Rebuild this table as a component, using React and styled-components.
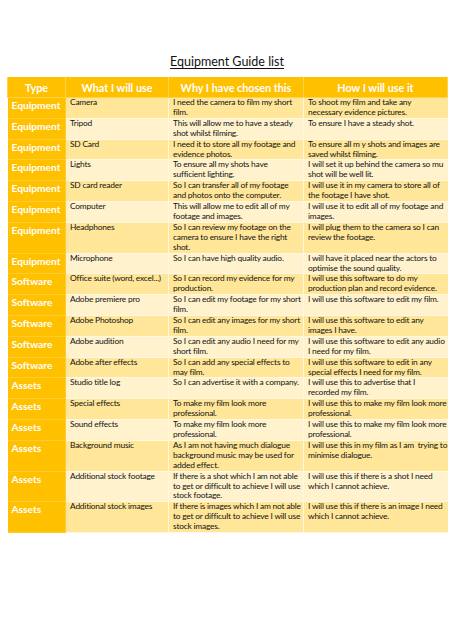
import React from 'react';
import styled, { createGlobalStyle } from 'styled-components';

const GlobalStyle = createGlobalStyle`
  html, body {
    margin: 0;
    padding: 0;
    background: #ffffff;
  }
  body {
    font-family: Lato, "Liberation Sans", sans-serif;
    color: #111;
  }
`;

const rows = [
  ['Equipment', 'Camera', 'I need the camera to film my short\nfilm.', 'To shoot my film and take any\nnecessary evidence pictures.'],
  ['Equipment', 'Tripod', 'This will allow me to have a steady\nshot whilst filming.', 'To ensure I have a steady shot.'],
  ['Equipment', 'SD Card', 'I need it to store all my footage and\nevidence photos.', 'To ensure all m y shots and images are\nsaved whilst filming.'],
  ['Equipment', 'Lights', 'To ensure all my shots have\nsufficient lighting.', 'I will set it up behind the camera so mu\nshot will be well lit.'],
  ['Equipment', 'SD card reader', 'So I can transfer all of my footage\nand photos onto the computer.', 'I will use it in my camera to store all of\nthe footage I have shot.'],
  ['Equipment', 'Computer', 'This will allow me to edit all of my\nfootage and images.', 'I will use it to edit all of my footage and\nimages.'],
  ['Equipment', 'Headphones', 'So I can review my footage on the\ncamera to ensure I have the right\nshot.', 'I will plug them to the camera so I can\nreview the footage.'],
  ['Equipment', 'Microphone', 'So I can have high quality audio.', 'I will have it placed near the actors to\noptimise the sound quality.'],
  ['Software', 'Office suite (word, excel...)', 'So I can record my evidence for my\nproduction.', 'I will use this software to do my\nproduction plan and record evidence.'],
  ['Software', 'Adobe premiere pro', 'So I can edit my footage for my short\nfilm.', 'I will use this software to edit my film.'],
  ['Software', 'Adobe Photoshop', 'So I can edit any images for my short\nfilm.', 'I will use this software to edit any\nimages I have.'],
  ['Software', 'Adobe audition', 'So I can edit any audio I need for my\nshort film.', 'I will use this software to edit any audio\nI need for my film.'],
  ['Software', 'Adobe after effects', 'So I can add any special effects to\nmay film.', 'I will use this software to edit in any\nspecial effects I need for my film.'],
  ['Assets', 'Studio title log', 'So I can advertise it with a company.', 'I will use this to advertise that I\nrecorded my film.'],
  ['Assets', 'Special effects', 'To make my film look more\nprofessional.', 'I will use this to make my film look more\nprofessional.'],
  ['Assets', 'Sound effects', 'To make my film look more\nprofessional.', 'I will use this to make my film look more\nprofessional.'],
  ['Assets', 'Background music', 'As I am not having much dialogue\nbackground music may be used for\nadded effect.', 'I will use this in my film as I am  trying to\nminimise dialogue.'],
  ['Assets', 'Additional stock footage', 'If there is a shot which I am not able\nto get or difficult to achieve I will use\nstock footage.', 'I will use this if there is a shot I need\nwhich I cannot achieve.'],
  ['Assets', 'Additional stock images', 'If there is images which I am not able\nto get or difficult to achieve I will use\nstock images.', 'I will use this if there is an image I need\nwhich I cannot achieve.'],
];

const Page = styled.div`
  padding: 53px 6px 40px 7px;
`;

const Title = styled.h1`
  margin: 0 0 7px;
  font-family: Lato, "Liberation Sans", sans-serif;
  font-weight: 400;
  font-size: 12.5px;
  line-height: 17px;
  text-align: center;
  text-decoration: underline;
  text-underline-offset: 2px;
  text-decoration-thickness: 1px;
  color: #111;
`;

const Table = styled.table`
  width: 440px;
  border-collapse: collapse;
  table-layout: fixed;
`;

const Head = styled.th`
  background: #ffc000;
  color: #ffffff;
  font-weight: 700;
  font-size: 10.8px;
  line-height: 19px;
  height: 20px;
  padding: 0;
  text-align: center;
  border: 1px solid #ffd24d;
  border-top: none;
  white-space: nowrap;
`;

const TypeCell = styled.td`
  background: #ffc000;
  color: #ffffff;
  font-weight: 700;
  font-size: 10.2px;
  line-height: 11px;
  padding: 2px 0 0 4px;
  vertical-align: top;
  border: 1px solid #ffcb33;
  border-left: none;
  white-space: nowrap;
`;

const Cell = styled.td`
  background: ${({ $dark }) => ($dark ? '#ffe699' : '#fff2cc')};
  font-size: 8.4px;
  line-height: 9.9px;
  letter-spacing: -0.2px;
  padding: 0 0 0 4px;
  vertical-align: top;
  white-space: pre;
  overflow: hidden;
  border: 1px solid #fff7e0;
  border-right: ${({ $last }) => ($last ? 'none' : '1px solid #fff7e0')};
  color: #141414;
`;

const Row = styled.tr`
  td:nth-child(2) {
    height: ${({ $lines }) => $lines * 9.9}px;
  }
`;

export default function App() {
  return (
    <>
      <GlobalStyle />
      <Page>
        <Title>Equipment  Guide list</Title>
        <Table>
          <colgroup>
            <col style={{ width: 58 }} />
            <col style={{ width: 103 }} />
            <col style={{ width: 135 }} />
            <col style={{ width: 144 }} />
          </colgroup>
          <thead>
            <tr>
              <Head>Type</Head>
              <Head>What I will use</Head>
              <Head>Why I have chosen this</Head>
              <Head>How I will use it</Head>
            </tr>
          </thead>
          <tbody>
            {rows.map(([type, what, why, how], i) => {
              const lines = Math.max(2, why.split('\n').length, how.split('\n').length);
              const dark = i % 2 === 0;
              return (
                <Row key={i} $lines={lines}>
                  <TypeCell>{type}</TypeCell>
                  <Cell $dark={dark}>{what}</Cell>
                  <Cell $dark={dark}>{why}</Cell>
                  <Cell $dark={dark} $last>{how}</Cell>
                </Row>
              );
            })}
          </tbody>
        </Table>
      </Page>
    </>
  );
}
